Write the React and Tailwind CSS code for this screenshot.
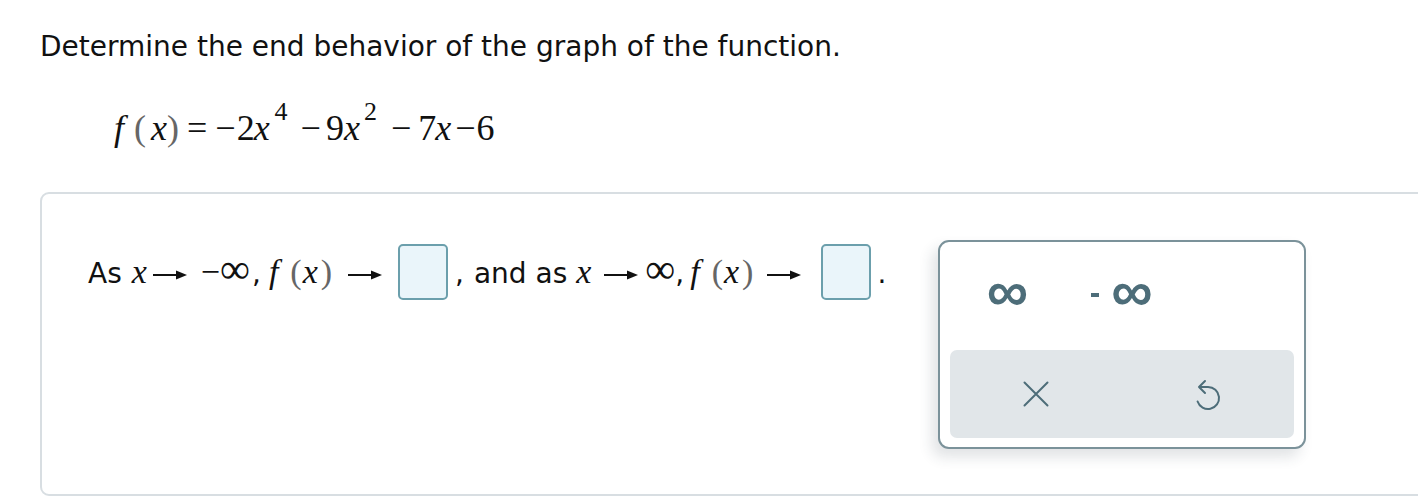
import React from 'react';

const sans = { fontFamily: '"DejaVu Sans", Verdana, sans-serif' };
const serif = { fontFamily: '"Liberation Serif", "Times New Roman", serif' };
const keypad = { fontFamily: '"Liberation Sans", Arial, sans-serif' };

const Arrow = ({ className = '' }) => (
    <svg width="34" height="12" viewBox="0 0 34 12" className={`inline-block align-[2px] ${className}`}>
        <line x1="0" y1="6" x2="25" y2="6" stroke="#111" strokeWidth="2" />
        <polygon points="23,1.5 34,6 23,10.5" fill="#111" />
    </svg>
);

const AnswerBox = ({ className = '' }) => (
    <span className={`inline-block align-[-17px] w-[50px] h-[56px] rounded-[5px] border-2 border-[#6b9fac] bg-[#eaf5fa] ${className}`} />
);

const FX = ({ className = '' }) => (
    <span className={`text-[34px] leading-none ${className}`} style={serif}>
        <span className="italic">f</span>
        <span className="ml-[12px] text-[#666]">(</span>
        <span className="ml-[1px] italic">x</span>
        <span className="ml-[3px] text-[#666]">)</span>
    </span>
);

const App = () => {
    return (
        <div className="w-[1418px] h-[502px] overflow-hidden bg-white text-[#111]" style={sans}>
            <div className="pt-[31px] pl-[40px] text-[28px] leading-[32px] whitespace-nowrap">
                Determine the end behavior of the graph of the function.
            </div>

            {/* equation */}
            <div className="mt-[45px] ml-[114px] flex items-baseline text-[36px] leading-[40px]" style={serif}>
                <span className="italic">f</span>
                <span className="ml-[10px] text-[#666]">(</span>
                <span className="ml-[5px] italic">x</span>
                <span className="text-[#666]">)</span>
                <span className="ml-[8px]">=</span>
                <span className="ml-[8px]">−</span>
                <span className="ml-[1px]">2</span>
                <span className="-ml-[1px] italic">x</span>
                <sup className="ml-[5px] text-[26px] top-[-20px]">4</sup>
                <span className="ml-[13px]">−</span>
                <span className="ml-[5px]">9</span>
                <span className="italic">x</span>
                <sup className="ml-[4px] text-[26px] top-[-20px]">2</sup>
                <span className="ml-[14px]">−</span>
                <span className="ml-[7px]">7</span>
                <span className="-ml-[1px] italic">x</span>
                <span className="ml-[4px]">−</span>
                <span className="ml-[1px]">6</span>
            </div>

            {/* answer area */}
            <div className="mt-[44px] ml-[40px] w-[1400px] h-[304px] rounded-[9px] border-2 border-[#d8dee2] pt-[46px] pl-[46px] flex items-start">
                <div className="mt-[4px] w-[850px] shrink-0 whitespace-nowrap text-[28px] leading-[56px]">
                    <span className="leading-none">As</span>
                    <span className="ml-[10px] italic text-[34px] leading-none" style={serif}>x</span>
                    <Arrow className="ml-[6px]" />
                    <span className="ml-[14px] text-[34px] leading-none" style={serif}>−</span>
                    <span className="text-[42px] leading-none" style={serif}>∞</span>
                    <span className="ml-[2px] leading-none">,</span>
                    <FX className="ml-[8px]" />
                    <Arrow className="ml-[16px]" />
                    <AnswerBox className="ml-[16px]" />
                    <span className="ml-[7px] leading-none">, </span>
                    <span className="ml-[1px] leading-none">and as</span>
                    <span className="ml-[9px] italic text-[34px] leading-none" style={serif}>x</span>
                    <Arrow className="ml-[13px]" />
                    <span className="ml-[7px] text-[42px] leading-none" style={serif}>∞</span>
                    <span className="leading-none">,</span>
                    <FX className="ml-[6px]" />
                    <Arrow className="ml-[14px]" />
                    <AnswerBox className="ml-[20px]" />
                    <span className="ml-[6px] leading-none">.</span>
                </div>

                {/* palette */}
                <div className="w-[368px] h-[209px] shrink-0 rounded-[11px] border-2 border-[#7b929a] bg-white shadow-[-6px_8px_14px_rgba(40,60,70,0.14)] px-[10px] pb-[9px] flex flex-col">
                    <div className="h-[108px] grid grid-cols-3 items-center text-[#4d6d79]">
                        <button className="pb-[10px] flex justify-center items-center text-[58px] font-bold leading-none" style={keypad}>∞</button>
                        <button className="pb-[10px] flex justify-center items-center text-[58px] font-bold leading-none" style={keypad}>
                            <span className="w-[8px] h-[4px] bg-[#4d6d79] mr-[12px] mt-[8px]" />
                            <span>∞</span>
                        </button>
                        <div />
                    </div>
                    <div className="h-[88px] rounded-[7px] bg-[#e1e6e9] grid grid-cols-2">
                        <button className="flex items-center justify-center">
                            <svg width="26" height="26" viewBox="0 0 26 26">
                                <path d="M1.5 1.5 L24.5 24.5 M24.5 1.5 L1.5 24.5" stroke="#4d6d79" strokeWidth="2" strokeLinecap="round" fill="none" />
                            </svg>
                        </button>
                        <button className="flex items-center justify-center">
                            <svg width="40" height="44" viewBox="0 0 40 44">
                                <path d="M17 9 L11 15 L17 21 M11 15 H20 A11 11 0 1 1 9.6 29.5" stroke="#4d6d79" strokeWidth="2" strokeLinecap="round" strokeLinejoin="round" fill="none" />
                            </svg>
                        </button>
                    </div>
                </div>
            </div>
        </div>
    );
};

export default App;
